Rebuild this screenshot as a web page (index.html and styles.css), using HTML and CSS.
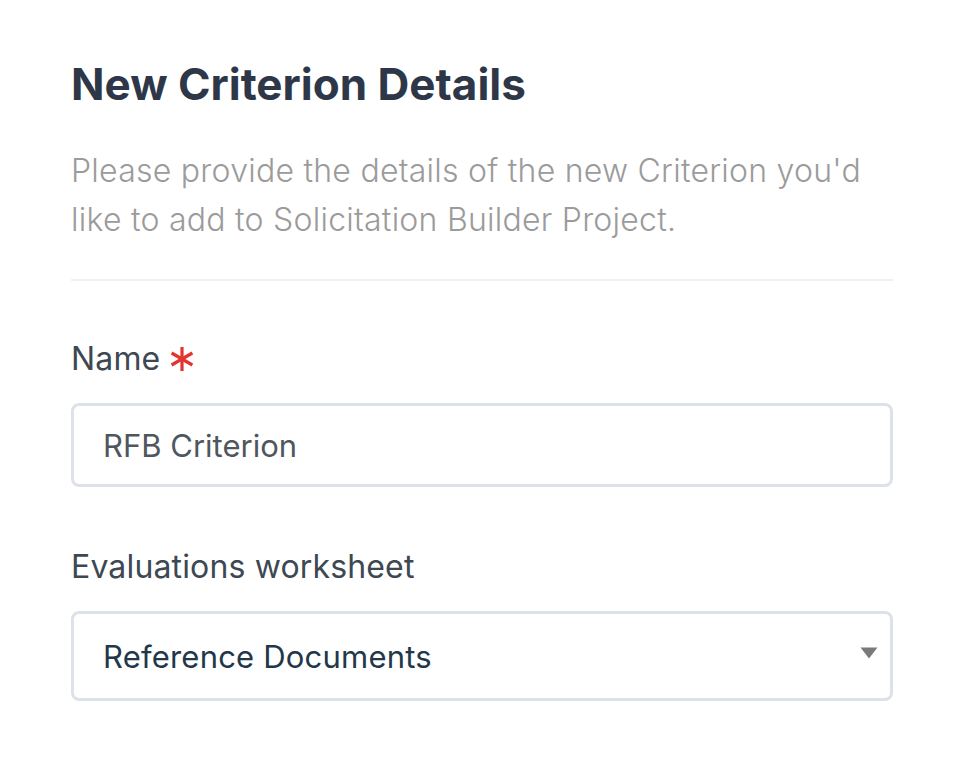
FILE: index.html
```html
<!DOCTYPE html>
<html>
<head>
<meta charset="utf-8">
<link rel="stylesheet" href="styles.css">
</head>
<body>
<div class="panel">
  <h1 class="title">New Criterion Details</h1>
  <p class="intro">Please provide the details of the new Criterion you'd like to add to Solicitation Builder Project.</p>
  <div class="divider"></div>
  <div class="field field-first">
    <label class="label">Name <svg class="req" width="24" height="26" viewBox="0 0 24 26"><g stroke="#e3342f" stroke-width="3.2" stroke-linecap="butt"><line x1="12" y1="1" x2="12" y2="25"/><line x1="1.6" y1="7" x2="22.4" y2="19"/><line x1="1.6" y1="19" x2="22.4" y2="7"/></g></svg></label>
    <div class="input">RFB Criterion</div>
  </div>
  <div class="field">
    <label class="label">Evaluations worksheet</label>
    <div class="select">
      <span class="select-value">Reference Documents</span>
      <svg class="caret" width="18" height="12" viewBox="0 0 18 12"><path d="M0.5 0.5 L17.5 0.5 L9 11.5 Z" fill="#7a7a7a"/></svg>
    </div>
  </div>
</div>
</body>
</html>
```
FILE: styles.css
```css
html, body {
  margin: 0;
  padding: 0;
  background: #ffffff;
}
body {
  font-family: Inter, "Noto Sans", sans-serif;
}
.panel {
  width: 822px;
  padding: 56px 0 0 71px;
}
.title {
  margin: 0;
  font-size: 44px;
  font-weight: 700;
  color: #2d3748;
  line-height: 56px;
  letter-spacing: 0;
}
.intro {
  margin: 34px 0 0 0;
  font-size: 32px;
  line-height: 49px;
  color: #9b9b9b;
  letter-spacing: 0.25px;
  font-weight: 300;
}
.divider {
  height: 2px;
  background: #eef1f4;
  margin-top: 35px;
}
.field {
  margin-top: 60px;
}
.field-first {
  margin-top: 58px;
}
.label {
  display: flex;
  align-items: center;
  gap: 10px;
  font-size: 32px;
  line-height: 40px;
  color: #3d4852;
  letter-spacing: 0.15px;
}
.req {
  display: block;
}
.input {
  margin-top: 24px;
  box-sizing: border-box;
  height: 84px;
  border: 3px solid #dde2ea;
  border-radius: 8px;
  padding-left: 29px;
  display: flex;
  align-items: center;
  font-size: 31px;
  color: #50565d;
  letter-spacing: 0;
}
.select {
  margin-top: 24px;
  box-sizing: border-box;
  height: 90px;
  border: 3px solid #dde2ea;
  border-radius: 8px;
  padding: 0 12px 6px 29px;
  display: flex;
  align-items: center;
  justify-content: space-between;
  font-size: 31px;
  color: #22384a;
  letter-spacing: 0.2px;
}
.select-value {
  padding-top: 6px;
}
.caret {
  display: block;
}
```
